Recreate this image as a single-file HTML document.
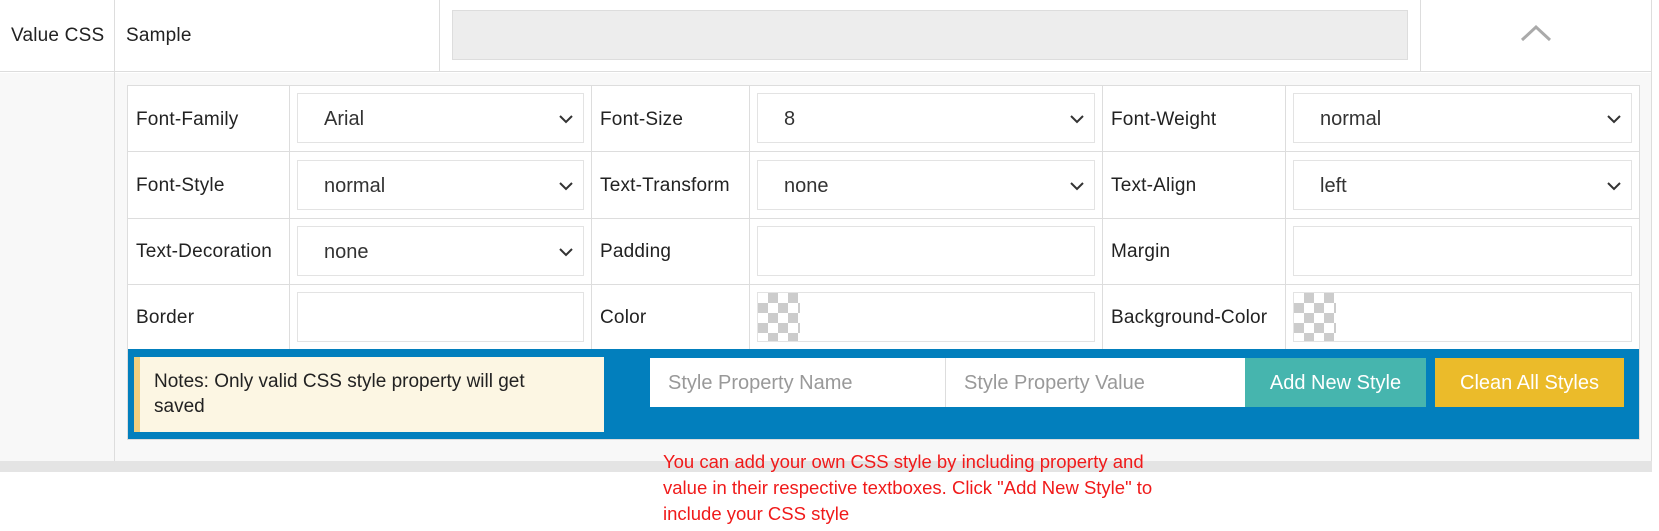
<!DOCTYPE html>
<html><head><meta charset="utf-8"><style>
*{box-sizing:border-box;margin:0;padding:0}
body{width:1659px;height:531px;background:#fff;position:relative;overflow:hidden;font-family:"Liberation Sans",sans-serif;color:#222;font-size:19px}
.a{position:absolute}
.lbl{position:absolute;line-height:24px;letter-spacing:0.2px}
.inp{position:absolute;background:#fff;border:1px solid #e3e3e3}
.sel{position:absolute;background:#fff;border:1px solid #e3e3e3;padding-left:26px;line-height:50px;color:#333;font-size:20px}
.sel svg{position:absolute;right:10px;top:20px}
.chk{position:absolute;left:0;top:0;width:42px;height:100%;background-color:#fff;background-image:linear-gradient(45deg,#ccc 25%,transparent 25%,transparent 75%,#ccc 75%),linear-gradient(45deg,#ccc 25%,transparent 25%,transparent 75%,#ccc 75%);background-size:20px 20px;background-position:0 0,10px 10px}
</style></head><body>
<div class="a" style="left:0;top:0;width:1652px;height:72px;border-bottom:1px solid #ddd"></div>
<div class="a" style="left:114px;top:0;width:1px;height:461px;background:#ddd"></div>
<div class="a" style="left:439px;top:0;width:1px;height:72px;background:#ddd"></div>
<div class="a" style="left:1420px;top:0;width:1px;height:72px;background:#ddd"></div>
<div class="a" style="left:1651px;top:0;width:1px;height:472px;background:#ddd"></div>
<div class="lbl" style="left:11px;top:24px">Value CSS</div>
<div class="lbl" style="left:126px;top:24px">Sample</div>
<div class="a" style="left:452px;top:10px;width:956px;height:50px;background:#ededed;border:1px solid #ddd"></div>
<svg class="a" style="left:1520px;top:24px" width="32" height="20"><path d="M2 16 L16 3 L30 16" fill="none" stroke="#aaa" stroke-width="3"/></svg>
<div class="a" style="left:0;top:73px;width:1651px;height:388px;background:#f8f8f8"></div>
<div class="a" style="left:114px;top:73px;width:1px;height:388px;background:#ddd"></div>
<div class="a" style="left:0;top:461px;width:1652px;height:11px;background:#e4e4e4"></div>
<div class="a" style="left:127px;top:85px;width:1513px;height:355px;background:#fff;border:1px solid #ddd"></div>
<div class="a" style="left:127px;top:151px;width:1513px;height:1px;background:#ddd"></div>
<div class="a" style="left:127px;top:218px;width:1513px;height:1px;background:#ddd"></div>
<div class="a" style="left:127px;top:284px;width:1513px;height:1px;background:#ddd"></div>
<div class="a" style="left:289px;top:85px;width:1px;height:264px;background:#ddd"></div>
<div class="a" style="left:591px;top:85px;width:1px;height:264px;background:#ddd"></div>
<div class="a" style="left:749px;top:85px;width:1px;height:264px;background:#ddd"></div>
<div class="a" style="left:1102px;top:85px;width:1px;height:264px;background:#ddd"></div>
<div class="a" style="left:1285px;top:85px;width:1px;height:264px;background:#ddd"></div>

<div class="lbl" style="left:136px;top:108px">Font-Family</div>
<div class="lbl" style="left:600px;top:108px">Font-Size</div>
<div class="lbl" style="left:1111px;top:108px">Font-Weight</div>
<div class="lbl" style="left:136px;top:174px">Font-Style</div>
<div class="lbl" style="left:600px;top:174px">Text-Transform</div>
<div class="lbl" style="left:1111px;top:174px">Text-Align</div>
<div class="lbl" style="left:136px;top:240px">Text-Decoration</div>
<div class="lbl" style="left:600px;top:240px">Padding</div>
<div class="lbl" style="left:1111px;top:240px">Margin</div>
<div class="lbl" style="left:136px;top:306px">Border</div>
<div class="lbl" style="left:600px;top:306px">Color</div>
<div class="lbl" style="left:1111px;top:306px">Background-Color</div>

<div class="sel" style="left:297px;top:93px;width:287px;height:50px">Arial<svg width="14" height="10"><path d="M1 2 L7 8 L13 2" fill="none" stroke="#333" stroke-width="2"/></svg></div>
<div class="sel" style="left:757px;top:93px;width:338px;height:50px">8<svg width="14" height="10"><path d="M1 2 L7 8 L13 2" fill="none" stroke="#333" stroke-width="2"/></svg></div>
<div class="sel" style="left:1293px;top:93px;width:339px;height:50px">normal<svg width="14" height="10"><path d="M1 2 L7 8 L13 2" fill="none" stroke="#333" stroke-width="2"/></svg></div>
<div class="sel" style="left:297px;top:160px;width:287px;height:50px">normal<svg width="14" height="10"><path d="M1 2 L7 8 L13 2" fill="none" stroke="#333" stroke-width="2"/></svg></div>
<div class="sel" style="left:757px;top:160px;width:338px;height:50px">none<svg width="14" height="10"><path d="M1 2 L7 8 L13 2" fill="none" stroke="#333" stroke-width="2"/></svg></div>
<div class="sel" style="left:1293px;top:160px;width:339px;height:50px">left<svg width="14" height="10"><path d="M1 2 L7 8 L13 2" fill="none" stroke="#333" stroke-width="2"/></svg></div>
<div class="sel" style="left:297px;top:226px;width:287px;height:50px">none<svg width="14" height="10"><path d="M1 2 L7 8 L13 2" fill="none" stroke="#333" stroke-width="2"/></svg></div>
<div class="inp" style="left:757px;top:226px;width:338px;height:50px"></div>
<div class="inp" style="left:1293px;top:226px;width:339px;height:50px"></div>
<div class="inp" style="left:297px;top:292px;width:287px;height:50px"></div>
<div class="inp" style="left:757px;top:292px;width:338px;height:50px;overflow:hidden"><div class="chk"></div></div>
<div class="inp" style="left:1293px;top:292px;width:339px;height:50px;overflow:hidden"><div class="chk"></div></div>

<div class="a" style="left:128px;top:349px;width:1511px;height:90px;background:#027fbd"></div>
<div class="a" style="left:134px;top:357px;width:470px;height:75px;background:#fcf6e3;border-left:6px solid #f0cf80;padding:12px 40px 0 14px;line-height:25px;color:#222;font-size:19px">Notes: Only valid CSS style property will get saved</div>
<div class="a" style="left:650px;top:358px;width:296px;height:49px;background:#fff;border-right:1px solid #ddd;color:#999;padding-left:18px;line-height:50px;font-size:20px">Style Property Name</div>
<div class="a" style="left:946px;top:358px;width:299px;height:49px;background:#fff;color:#999;padding-left:18px;line-height:50px;font-size:20px">Style Property Value</div>
<div class="a" style="left:1245px;top:358px;width:181px;height:49px;background:#46b5ae;color:#fff;text-align:center;line-height:50px;font-size:20px">Add New Style</div>
<div class="a" style="left:1435px;top:358px;width:189px;height:49px;background:#ebbb2a;color:#fff;text-align:center;line-height:50px;font-size:20px">Clean All Styles</div>

<div class="a" style="left:663px;top:449px;width:525px;color:#f01a1a;line-height:26px;font-size:18.5px">You can add your own CSS style by including property and value in their respective textboxes. Click "Add New Style" to include your CSS style</div>
</body></html>
